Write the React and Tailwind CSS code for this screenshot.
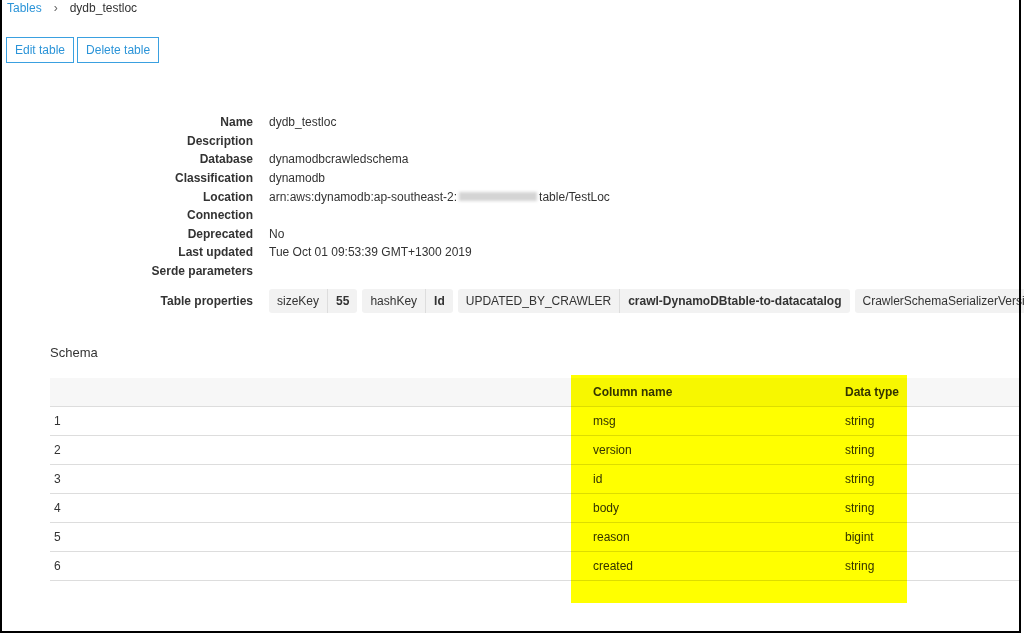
import React from 'react';

const details = [
  ['Name', 'dydb_testloc'],
  ['Description', ''],
  ['Database', 'dynamodbcrawledschema'],
  ['Classification', 'dynamodb'],
  ['Location', 'loc'],
  ['Connection', ''],
  ['Deprecated', 'No'],
  ['Last updated', 'Tue Oct 01 09:53:39 GMT+1300 2019'],
  ['Serde parameters', ''],
];

const props = [
  ['sizeKey', '55'],
  ['hashKey', 'Id'],
  ['UPDATED_BY_CRAWLER', 'crawl-DynamoDBtable-to-datacatalog'],
  ['CrawlerSchemaSerializerVersion', '1.0'],
];

const rows = [
  ['msg', 'string'],
  ['version', 'string'],
  ['id', 'string'],
  ['body', 'string'],
  ['reason', 'bigint'],
  ['created', 'string'],
];

export default function App() {
  return (
    <div className="relative w-[1024px] h-[634px] overflow-hidden bg-white text-[12px] text-[#333] font-[Liberation_Sans,sans-serif]">
      {/* screenshot frame */}
      <div className="absolute left-0 top-0 w-[1021px] h-[633px] border-l-2 border-r-2 border-b-2 border-black pointer-events-none z-20" />

      <div className="flex items-center gap-3 pl-[7px] h-[16px] text-[12px]">
        <span className="text-[#2b94d8]">Tables</span>
        <span className="text-[#666]">›</span>
        <span>dydb_testloc</span>
      </div>

      <div className="flex gap-[3px] pl-[6px] mt-[21px]">
        <button className="h-[26px] px-[8px] border border-[#3aa0e0] text-[#2b94d8] text-[12px]">Edit table</button>
        <button className="h-[26px] px-[8px] border border-[#3aa0e0] text-[#2b94d8] text-[12px]">Delete table</button>
      </div>

      <div className="mt-[50px] flex flex-col">
        {details.map(([k, v]) => (
          <div key={k} className="flex h-[18.6px] items-center">
            <div className="w-[253px] shrink-0 text-right font-bold">{k}</div>
            <div className="pl-[16px] whitespace-nowrap flex items-center">
              {v === 'loc' ? (
                <>
                  arn:aws:dynamodb:ap-southeast-2:
                  <span className="inline-block w-[78px] h-[9px] mx-[2px] bg-[#d4d4d4] blur-[1.5px]" />
                  table/TestLoc
                </>
              ) : v}
            </div>
          </div>
        ))}
        <div className="flex items-center mt-[9px]">
          <div className="w-[253px] shrink-0 text-right font-bold">Table properties</div>
          <div className="pl-[16px] flex gap-[5px] whitespace-nowrap">
            {props.map(([k, v]) => (
              <div key={k} className="flex shrink-0 h-[24px] items-center bg-[#f2f2f2] rounded-[3px]">
                <span className="px-[8px]">{k}</span>
                <span className="px-[8px] font-bold border-l border-[#ddd] h-full flex items-center">{v}</span>
              </div>
            ))}
          </div>
        </div>
      </div>

      <div className="ml-[50px] mt-[30px] text-[13px]">Schema</div>

      <div className="relative ml-[50px] mt-[15px] w-[970px]">
        <div className="relative">
          <div className="flex h-[29px] items-center bg-[#f7f7f7] border-b border-[#ddd] font-bold">
            <div className="w-[543px]" />
            <div className="w-[252px]">Column name</div>
            <div>Data type</div>
          </div>
          {rows.map(([n, t], i) => (
            <div key={n} className="flex h-[29px] items-center border-b border-[#ddd]">
              <div className="w-[543px] pl-[4px]">{i + 1}</div>
              <div className="w-[252px]">{n}</div>
              <div>{t}</div>
            </div>
          ))}
        </div>
        <div className="absolute left-[521px] top-[-3px] w-[336px] h-[228px] bg-[#ffff00] mix-blend-multiply" />
      </div>
    </div>
  );
}
